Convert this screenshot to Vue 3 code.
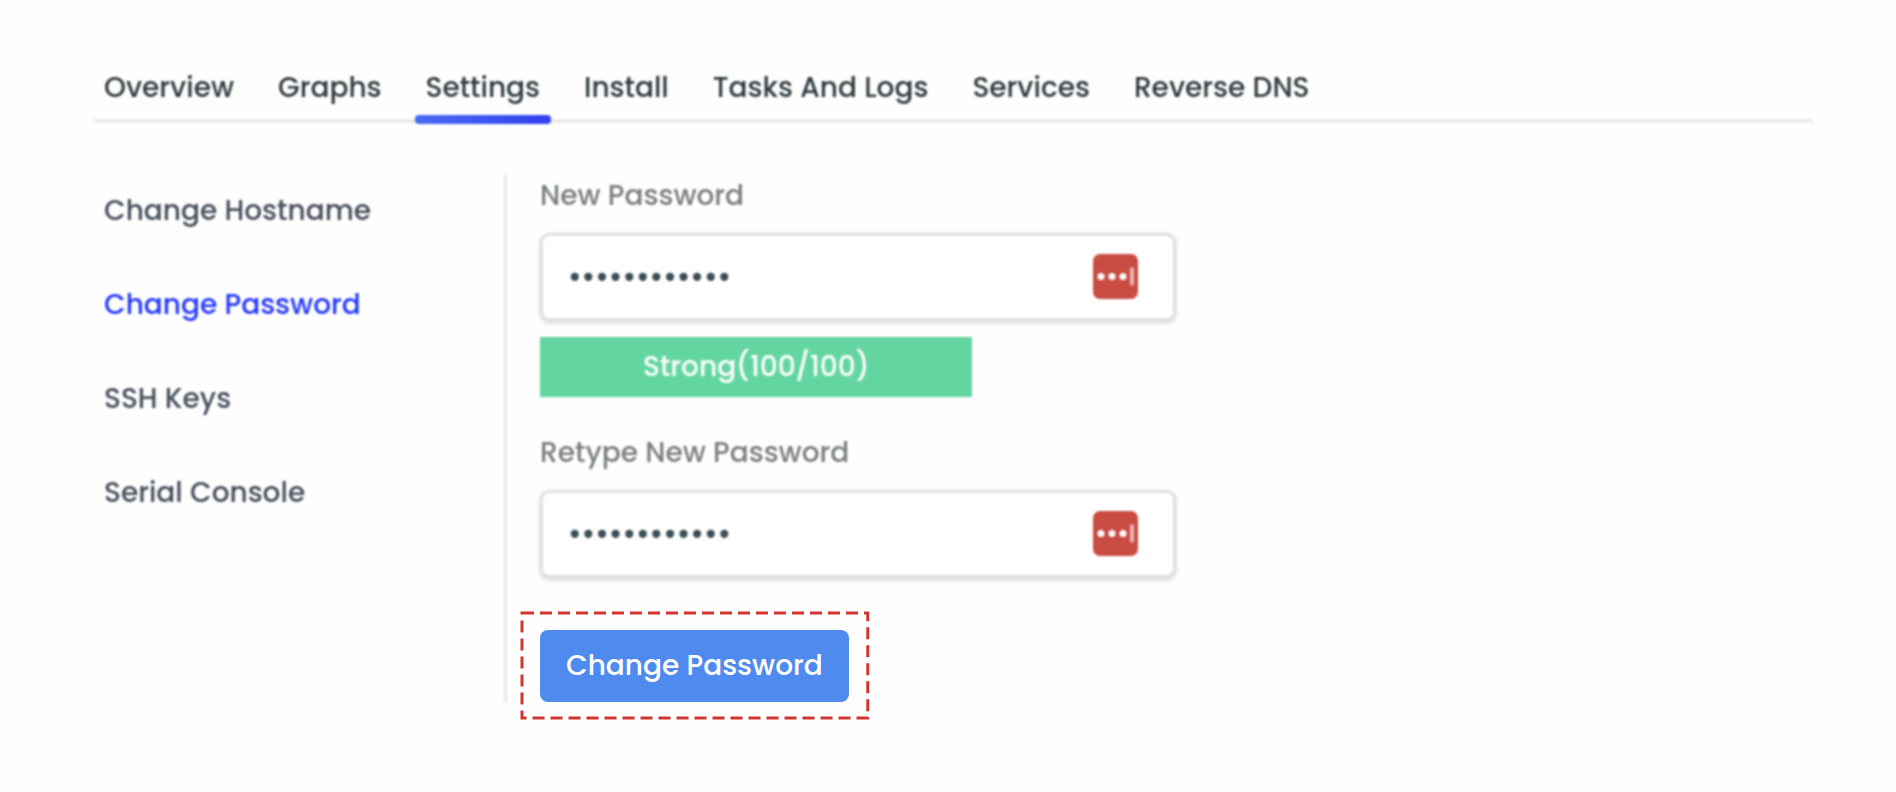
<template>
  <div class="page">
    <nav class="tabs soft" aria-label="Server sections">
      <a v-for="tab in tabs" :key="tab" href="#" :class="['tab', { 'tab--active': tab === activeTab }]"
        @click.prevent="activeTab = tab">
        {{ tab }}
      </a>
    </nav>

    <main class="content">
      <nav class="sidebar soft" aria-label="Settings">
        <a v-for="item in menu" :key="item" href="#" :class="['menu-item', { 'menu-item--active': item === activeItem }]"
          @click.prevent="activeItem = item">
          {{ item }}
        </a>
      </nav>

      <form class="form" @submit.prevent>
        <div v-for="field in fields" :key="field.id" class="field soft">
          <label :for="field.id" class="label">{{ field.label }}</label>
          <div class="input-wrap">
            <input :id="field.id" v-model="field.value" type="password" class="input" autocomplete="new-password" />
            <svg class="manager-icon" viewBox="0 0 45 45" aria-hidden="true">
              <rect width="45" height="45" rx="7" fill="#c94b42" />
              <circle cx="8" cy="22.5" r="3.5" fill="#fff" />
              <circle cx="19" cy="22.5" r="3.5" fill="#fff" />
              <circle cx="30" cy="22.5" r="3.5" fill="#fff" />
              <rect x="37" y="13.5" width="4" height="18" rx="1" fill="#efb5b0" />
            </svg>
          </div>
          <div v-if="field.strength" class="strength">{{ field.strength }}</div>
        </div>

        <div class="highlight">
          <svg class="highlight-frame" aria-hidden="true">
            <rect width="100%" height="100%" />
          </svg>
          <button type="submit" class="btn-submit">Change Password</button>
        </div>
      </form>
    </main>
  </div>
</template>

<script setup>
import { ref } from 'vue'

const tabs = ['Overview', 'Graphs', 'Settings', 'Install', 'Tasks And Logs', 'Services', 'Reverse DNS']
const menu = ['Change Hostname', 'Change Password', 'SSH Keys', 'Serial Console']

const activeTab = ref('Settings')
const activeItem = ref('Change Password')

const fields = ref([
  { id: 'new-password', label: 'New Password', value: 'abcdefghijkl', strength: 'Strong(100/100)' },
  { id: 'retype-password', label: 'Retype New Password', value: 'abcdefghijkl' }
])
</script>

<style>
body {
  margin: 0;
  background: #fefefe;
}
</style>

<style scoped>
.page {
  box-sizing: border-box;
  padding: 64px 83px 64px 93px;
  font-family: Poppins, Inter, sans-serif;
  font-size: 28px;
  font-weight: 500;
  line-height: 48px;
}

/* everything except the highlighted button is out of focus */
.soft {
  filter: blur(1px);
}

.tabs {
  display: flex;
  gap: 22px;
  border-bottom: 4px solid #ececec;
}

.tab {
  position: relative;
  padding: 0 11px 7px;
  color: #2f3b3f;
  text-decoration: none;
}

.tab--active::after {
  content: '';
  position: absolute;
  left: 0;
  right: 0;
  bottom: -5px;
  height: 9px;
  border-radius: 4px;
  background: linear-gradient(90deg, #4a6af5, #3040ee);
}

.content {
  display: flex;
  margin-top: 51px;
}

.sidebar {
  box-sizing: border-box;
  width: 414px;
  flex-shrink: 0;
  display: flex;
  flex-direction: column;
  gap: 46px;
  padding: 13px 11px;
  border-right: 3px solid #e9e6e8;
}

.menu-item {
  color: #464e5a;
  text-decoration: none;
}

.menu-item--active {
  color: #2438fb;
}

.form {
  flex: 1;
  max-width: 636px;
  margin-left: 33px;
}

.field {
  margin-bottom: 34px;
}

.label {
  display: block;
  margin-bottom: 15px;
  line-height: 44px;
  color: #797e7d;
}

.input-wrap {
  position: relative;
}

.input {
  box-sizing: border-box;
  display: block;
  width: 100%;
  height: 88px;
  padding: 0 96px 0 25px;
  border: 3px solid #dfdfdf;
  border-radius: 9px;
  background: #fff;
  box-shadow: 0 2px 4px rgba(0, 0, 0, 0.16);
  font-family: Poppins, Inter, sans-serif;
  font-size: 33px;
  color: #3a4c55;
  outline: none;
}

.manager-icon {
  position: absolute;
  top: 21px;
  right: 38px;
  width: 45px;
  height: 45px;
}

.strength {
  width: 68%;
  margin-top: 16px;
  background: #63d5a0;
  color: #fff;
  line-height: 60px;
  text-align: center;
}

.highlight {
  position: relative;
  width: fit-content;
  margin-top: 52px;
}

.highlight-frame {
  position: absolute;
  top: -17px;
  left: -18px;
  width: calc(100% + 37px);
  height: calc(100% + 33px);
  overflow: visible;
}

.highlight-frame rect {
  fill: none;
  stroke: #d0352f;
  stroke-width: 3px;
  stroke-dasharray: 12 6;
}

.btn-submit {
  position: relative;
  display: block;
  height: 72px;
  padding: 0 26px;
  border: none;
  border-radius: 8px;
  background: #4f8aee;
  color: #fff;
  font: inherit;
  cursor: pointer;
}
</style>
